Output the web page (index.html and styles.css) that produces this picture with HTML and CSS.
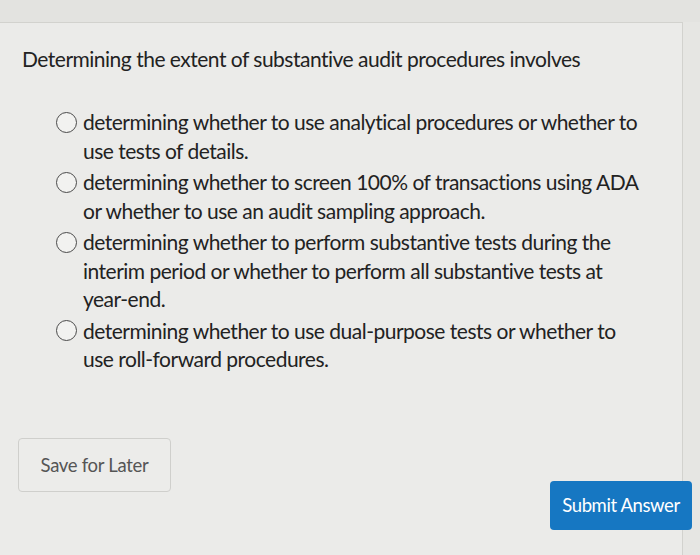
FILE: index.html
```html
<!DOCTYPE html>
<html>
<head>
<meta charset="utf-8">
<link rel="stylesheet" href="styles.css">
</head>
<body>
<div class="topstrip"></div>
<div class="card">
  <p class="question">Determining the extent of substantive audit procedures involves</p>
  <ul class="options">
    <li class="option"><span class="radio"></span><span class="label">determining whether to use analytical procedures or whether to use tests of details.</span></li>
    <li class="option"><span class="radio"></span><span class="label">determining whether to screen 100% of transactions using ADA or whether to use an audit sampling approach.</span></li>
    <li class="option"><span class="radio"></span><span class="label">determining whether to perform substantive tests during the interim period or whether to perform all substantive tests at year-end.</span></li>
    <li class="option"><span class="radio"></span><span class="label">determining whether to use dual-purpose tests or whether to use roll-forward procedures.</span></li>
  </ul>
  <div class="save-row"><button class="btn-save">Save for Later</button></div>
  <div class="submit-row"><button class="btn-submit">Submit Answer</button></div>
</div>
</body>
</html>
```
FILE: styles.css
```css
html, body {
  margin: 0;
  padding: 0;
  background: #e6e6e3;
  font-family: Lato, "Liberation Sans", sans-serif;
  color: #222;
}
.topstrip {
  height: 22px;
  background: #e3e3e0;
}
.card {
  width: 683px;
  height: 533px;
  box-sizing: border-box;
  background: #ebebe9;
  border-top: 1px solid #d2d2ce;
  border-right: 1px solid #d2d2ce;
  display: flex;
  flex-direction: column;
}
.question {
  margin: 24px 0 0 22px;
  font-size: 21px;
  letter-spacing: -0.5px;
  line-height: 24px;
}
.options {
  list-style: none;
  margin: 37px 0 0 0;
  padding: 0 0 0 56px;
  display: flex;
  flex-direction: column;
  gap: 3px;
}
.option {
  display: flex;
  align-items: flex-start;
  gap: 6px;
}
.radio {
  flex: none;
  width: 19px;
  height: 19px;
  border: 1.6px solid #4a4a4a;
  border-radius: 50%;
  margin-top: 3.5px;
  background: #f2f2f0;
}
.label {
  width: 562px;
  font-size: 21px;
  letter-spacing: -0.5px;
  line-height: 28.5px;
}
.save-row {
  margin: 64px 0 0 18px;
}
.btn-save {
  width: 153px;
  height: 54px;
  background: #ececea;
  border: 1.5px solid #cfcfcc;
  border-radius: 4px;
  font-family: Lato, "Liberation Sans", sans-serif;
  font-size: 18.5px;
  letter-spacing: -0.3px;
  color: #555;
  cursor: pointer;
}
.submit-row {
  display: flex;
  justify-content: flex-end;
  margin: -11px 0 0 0;
}
.btn-submit {
  width: 142px;
  height: 49px;
  background: #1677c2;
  border: none;
  border-radius: 4px;
  font-family: Lato, "Liberation Sans", sans-serif;
  font-size: 18.5px;
  letter-spacing: -0.4px;
  color: #fff;
  margin-right: -10px;
  cursor: pointer;
}
```
